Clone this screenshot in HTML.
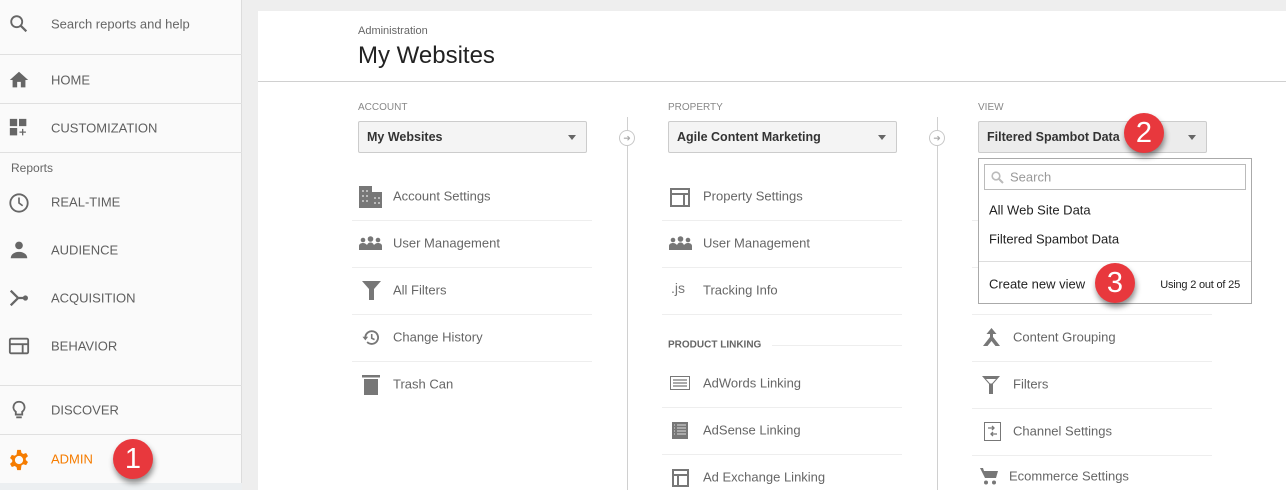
<!DOCTYPE html>
<html><head><meta charset="utf-8"><style>
*{margin:0;padding:0;box-sizing:border-box}
body{width:1286px;height:490px;overflow:hidden;background:#eeeeee;font-family:"Liberation Sans",Arial,sans-serif;position:relative}
.a{position:absolute}
#side{left:0;top:0;width:242px;height:490px;background:#fafafa;border-right:1px solid #dcdcdc}
.hr{position:absolute;height:1px;background:#e0e0e0}
.nav{position:absolute;left:51px;font-size:13px;color:#5f5f5f;transform:translateY(-50%)}
.ic{position:absolute;left:8px;transform:translateY(-50%)}
#card{left:258px;top:11px;width:1028px;height:479px;background:#fff}
.lbl{position:absolute;font-size:10px;color:#888}
.dd{position:absolute;height:32px;border:1px solid #ccc;border-radius:2px;background:#f4f4f4;font-size:12.5px;font-weight:bold;color:#333;padding:8px 0 0 8px}
.dd:after{content:"";position:absolute;right:10px;top:13px;border:4px solid transparent;border-top:5px solid #666}
.it{position:absolute;font-size:13px;color:#666;transform:translateY(-50%)}
.vl{position:absolute;width:1px;background:#d0d0d0;top:117px;height:373px}
.cir{position:absolute;width:16px;height:16px;border:1px solid #c8c8c8;border-radius:50%;background:#fff;color:#aaa;font-size:9px;text-align:center;line-height:14px}
.badge{position:absolute;width:40px;height:40px;border-radius:50%;background:#e8383d;color:#fff;font-size:29px;text-align:center;line-height:40px;box-shadow:1px 4px 6px rgba(0,0,0,.45)}
.g{fill:#777}
</style></head><body>
<div id="side" class="a">
 <svg class="ic" style="top:24px" width="22" height="22" viewBox="0 0 24 24"><circle cx="9.5" cy="9.5" r="6" fill="none" stroke="#666" stroke-width="2"/><path d="M14 14l6 6" stroke="#666" stroke-width="2.4"/></svg>
 <div class="nav" style="top:24px;text-transform:none;color:#666">Search reports and help</div>
 <div class="hr" style="top:54px;left:0;width:242px"></div>
 <svg class="ic" style="top:80px" width="22" height="22" viewBox="0 0 24 24"><path d="M10 20v-6h4v6h5v-8h3L12 3 2 12h3v8z" fill="#666"/></svg>
 <div class="nav" style="top:80px">HOME</div>
 <div class="hr" style="top:103px;left:0;width:242px"></div>
 <svg class="ic" style="top:128px" width="22" height="22" viewBox="0 0 24 24"><path d="M2 2h8v8H2zM12 2h8v8h-8zM2 12h8v8H2z" fill="#666"/><path d="M16 13v7M12.5 16.5h7" stroke="#666" stroke-width="1.4"/></svg>
 <div class="nav" style="top:128px">CUSTOMIZATION</div>
 <div class="hr" style="top:152px;left:0;width:242px"></div>
 <div class="a" style="left:11px;top:161px;font-size:12px;color:#666">Reports</div>
 <svg class="ic" style="top:203px" width="22" height="22" viewBox="0 0 24 24"><circle cx="12" cy="12" r="9.5" fill="none" stroke="#666" stroke-width="2"/><path d="M12 6v6l4 3" fill="none" stroke="#666" stroke-width="1.8"/></svg>
 <div class="nav" style="top:202px">REAL-TIME</div>
 <svg class="ic" style="top:250px" width="22" height="22" viewBox="0 0 24 24"><circle cx="12" cy="7" r="4.2" fill="#666"/><path d="M3 21c0-5 5-7 9-7s9 2 9 7z" fill="#666"/></svg>
 <div class="nav" style="top:250px">AUDIENCE</div>
 <svg class="ic" style="top:298px" width="22" height="22" viewBox="0 0 24 24"><path d="M3 4l8 8-8 8M11 12h7" fill="none" stroke="#666" stroke-width="2.5"/><circle cx="19" cy="12" r="2.8" fill="#666"/></svg>
 <div class="nav" style="top:298px">ACQUISITION</div>
 <svg class="ic" style="top:346px" width="22" height="22" viewBox="0 0 24 24"><rect x="2" y="4" width="20" height="16" rx="1.5" fill="none" stroke="#666" stroke-width="2"/><path d="M2 10h20M16 10v10" stroke="#666" stroke-width="2"/></svg>
 <div class="nav" style="top:346px">BEHAVIOR</div>
 <div class="hr" style="top:385px;left:0;width:242px"></div>
 <svg class="ic" style="top:410px" width="22" height="22" viewBox="0 0 24 24"><path d="M12 3a6 6 0 0 0-3.5 10.9V17h7v-3.1A6 6 0 0 0 12 3z" fill="none" stroke="#666" stroke-width="2"/><path d="M9 20h6" stroke="#666" stroke-width="2"/></svg>
 <div class="nav" style="top:410px">DISCOVER</div>
 <div class="hr" style="top:434px;left:0;width:242px"></div>
 <svg class="ic" style="top:460px" width="22" height="22" viewBox="0 0 24 24"><path d="M12 7.5a4.5 4.5 0 1 0 0 9 4.5 4.5 0 0 0 0-9zM10 1h4l.7 3.2 2 1.2 3.1-1 2 3.4-2.4 2.2v2l2.4 2.2-2 3.4-3.1-1-2 1.2L14 23h-4l-.7-3.2-2-1.2-3.1 1-2-3.4 2.4-2.2v-2L2.2 9.8l2-3.4 3.1 1 2-1.2z" fill="#f57c00" fill-rule="evenodd"/></svg>
 <div class="nav" style="top:459px;color:#f57c00">ADMIN</div>
 <div class="a" style="top:483px;left:0;width:242px;height:7px;background:#eceff1"></div>
</div>

<div id="card" class="a"></div>
<div class="a" style="left:358px;top:25px;font-size:11px;color:#666">Administration</div>
<div class="a" style="left:358px;top:42px;font-size:24px;color:#222">My Websites</div>
<div class="hr" style="top:81px;left:258px;width:1028px;background:#d0d0d0"></div>

<div class="lbl" style="left:358px;top:102px">ACCOUNT</div>
<div class="dd" style="left:358px;top:121px;width:229px">My Websites</div>
<svg class="a" style="left:359px;top:186px" width="23" height="22" viewBox="0 0 23 22"><path d="M0 0h13v6h10v16H0z" class="g"/><g fill="#bbb"><rect x="3" y="4" width="2" height="2"/><rect x="7" y="4" width="2" height="2"/><rect x="3" y="9" width="2" height="2"/><rect x="7" y="9" width="2" height="2"/><rect x="3" y="14" width="2" height="2"/><rect x="7" y="14" width="2" height="2"/><rect x="15" y="11" width="2" height="2"/><rect x="19" y="11" width="2" height="2"/><rect x="15" y="16" width="2" height="2"/><rect x="19" y="16" width="2" height="2"/></g></svg>
<div class="it" style="left:393px;top:196px">Account Settings</div>
<div class="hr" style="top:220px;left:352px;width:240px;background:#eee"></div>
<svg class="a" style="left:359px;top:236px" width="23" height="14" viewBox="0 0 23 14"><circle cx="4" cy="4" r="2.3" class="g"/><circle cx="11.5" cy="3" r="2.8" class="g"/><circle cx="19" cy="4" r="2.3" class="g"/><path d="M0 14v-4c0-2 2-3 4-3s3 1 4 2c1-2 2-2.5 3.5-2.5S14 7 15 9c1-1 2-2 4-2s4 1 4 3v4z" class="g"/></svg>
<div class="it" style="left:393px;top:243px">User Management</div>
<div class="hr" style="top:267px;left:352px;width:240px;background:#eee"></div>
<svg class="a" style="left:362px;top:281px" width="19" height="19" viewBox="0 0 19 19"><path d="M0 0h19l-7 8v11h-5V8z" class="g"/></svg>
<div class="it" style="left:393px;top:290px">All Filters</div>
<div class="hr" style="top:314px;left:352px;width:240px;background:#eee"></div>
<svg class="a" style="left:362px;top:329px" width="18" height="17" viewBox="0 0 24 24"><path d="M4 12a9 9 0 1 1 2.6 6.4" fill="none" stroke="#777" stroke-width="2.6"/><path d="M0 11h8l-4 5z" class="g"/><path d="M13 7v6l4 2" fill="none" stroke="#777" stroke-width="2.2"/></svg>
<div class="it" style="left:393px;top:337px">Change History</div>
<div class="hr" style="top:361px;left:352px;width:240px;background:#eee"></div>
<svg class="a" style="left:362px;top:375px" width="18" height="20" viewBox="0 0 18 20"><rect x="0" y="0" width="18" height="2.5" class="g"/><rect x="6" y="-1" width="6" height="2" class="g"/><rect x="2" y="4" width="14" height="16" class="g"/></svg>
<div class="it" style="left:393px;top:384px">Trash Can</div>

<div class="vl" style="left:627px"></div>
<div class="cir" style="left:619px;top:130px">➜</div>
<div class="vl" style="left:937px"></div>
<div class="cir" style="left:929px;top:130px">➜</div>

<div class="lbl" style="left:668px;top:102px">PROPERTY</div>
<div class="dd" style="left:668px;top:121px;width:229px">Agile Content Marketing</div>
<svg class="a" style="left:670px;top:188px" width="20" height="19" viewBox="0 0 20 19"><rect x="1" y="1" width="18" height="17" fill="none" stroke="#777" stroke-width="2"/><path d="M1 6h18M14 6v12" stroke="#777" stroke-width="2"/></svg>
<div class="it" style="left:703px;top:196px">Property Settings</div>
<div class="hr" style="top:220px;left:662px;width:240px;background:#eee"></div>
<svg class="a" style="left:669px;top:236px" width="23" height="14" viewBox="0 0 23 14"><circle cx="4" cy="4" r="2.3" class="g"/><circle cx="11.5" cy="3" r="2.8" class="g"/><circle cx="19" cy="4" r="2.3" class="g"/><path d="M0 14v-4c0-2 2-3 4-3s3 1 4 2c1-2 2-2.5 3.5-2.5S14 7 15 9c1-1 2-2 4-2s4 1 4 3v4z" class="g"/></svg>
<div class="it" style="left:703px;top:243px">User Management</div>
<div class="hr" style="top:267px;left:662px;width:240px;background:#eee"></div>
<div class="it" style="left:671px;top:288px;font-size:14px;color:#777">.js</div>
<div class="it" style="left:703px;top:290px">Tracking Info</div>
<div class="hr" style="top:314px;left:662px;width:240px;background:#eee"></div>
<div class="it" style="left:668px;top:345px;font-size:10px;font-weight:bold;color:#666">PRODUCT LINKING</div>
<div class="hr" style="top:345px;left:772px;width:130px;background:#eee"></div>
<svg class="a" style="left:670px;top:376px" width="20" height="14" viewBox="0 0 20 14"><rect x=".5" y=".5" width="19" height="13" fill="none" stroke="#777"/><path d="M3 4h14M3 7h14M3 10h14" stroke="#777" stroke-width="1.2"/></svg>
<div class="it" style="left:703px;top:383px">AdWords Linking</div>
<div class="hr" style="top:407px;left:662px;width:240px;background:#eee"></div>
<svg class="a" style="left:672px;top:422px" width="16" height="17" viewBox="0 0 16 17"><rect width="16" height="17" class="g"/><path d="M5 3h9M5 6h9M5 9h9M5 12h9M2 3h1M2 6h1M2 9h1M2 12h1" stroke="#ddd" stroke-width="1"/></svg>
<div class="it" style="left:703px;top:430px">AdSense Linking</div>
<div class="hr" style="top:454px;left:662px;width:240px;background:#eee"></div>
<svg class="a" style="left:672px;top:469px" width="17" height="18" viewBox="0 0 17 18"><rect x="1" y="1" width="15" height="16" fill="none" stroke="#777" stroke-width="2"/><path d="M1 6h15M6 6v11" stroke="#777" stroke-width="2"/></svg>
<div class="it" style="left:703px;top:477px">Ad Exchange Linking</div>

<div class="lbl" style="left:978px;top:102px">VIEW</div>
<div class="dd" style="left:978px;top:121px;width:229px;background:#ececec">Filtered Spambot Data</div>
<div class="hr" style="top:220px;left:972px;width:240px;background:#eee"></div>
<div class="hr" style="top:267px;left:972px;width:240px;background:#eee"></div>
<div class="hr" style="top:314px;left:972px;width:240px;background:#eee"></div>
<svg class="a" style="left:983px;top:328px" width="17" height="18" viewBox="0 0 17 18"><path d="M8.5 0l5 6h-3.5v3l7 9h-4.5l-4-5-4 5H0l7-9V6H3.5z" class="g"/></svg>
<div class="it" style="left:1013px;top:337px">Content Grouping</div>
<div class="hr" style="top:361px;left:972px;width:240px;background:#eee"></div>
<svg class="a" style="left:982px;top:376px" width="18" height="18" viewBox="0 0 18 18"><path d="M0 0h18l-7 8v10H7V8z" class="g"/><path d="M4 3h10l-4 4.5H8z" fill="#fff"/></svg>
<div class="it" style="left:1013px;top:384px">Filters</div>
<div class="hr" style="top:408px;left:972px;width:240px;background:#eee"></div>
<svg class="a" style="left:984px;top:422px" width="17" height="19" viewBox="0 0 17 19"><rect x=".5" y=".5" width="16" height="18" fill="none" stroke="#777"/><path d="M4 6h6M8 4l2 2-2 2M13 12H7M9 10l-2 2 2 2" fill="none" stroke="#777" stroke-width="1.3"/></svg>
<div class="it" style="left:1013px;top:431px">Channel Settings</div>
<div class="hr" style="top:455px;left:972px;width:240px;background:#eee"></div>
<svg class="a" style="left:980px;top:468px" width="18" height="17" viewBox="0 0 18 17"><path d="M0 0h3l1 3h14l-2 7H5z" class="g"/><circle cx="6" cy="14.5" r="2" class="g"/><circle cx="14" cy="14.5" r="2" class="g"/></svg>
<div class="it" style="left:1009px;top:476px">Ecommerce Settings</div>

<div class="a" style="left:978px;top:158px;width:274px;height:146px;background:#fff;border:1px solid #aaa"></div>
<div class="a" style="left:984px;top:164px;width:262px;height:26px;border:1px solid #bbb;background:#fff"></div>
<svg class="a" style="left:991px;top:171px" width="13" height="13" viewBox="0 0 13 13"><circle cx="5" cy="5" r="3.8" fill="none" stroke="#bbb" stroke-width="1.6"/><path d="M8 8l4 4" stroke="#bbb" stroke-width="2"/></svg>
<div class="it" style="left:1010px;top:177px;color:#999">Search</div>
<div class="it" style="left:989px;top:210px;color:#222">All Web Site Data</div>
<div class="it" style="left:989px;top:239px;color:#222">Filtered Spambot Data</div>
<div class="hr" style="top:261px;left:979px;width:272px;background:#ddd"></div>
<div class="it" style="left:989px;top:284px;color:#222">Create new view</div>
<div class="it" style="right:46px;top:285px;font-size:11px;color:#222;letter-spacing:-0.2px">Using 2 out of 25</div>

<div class="badge" style="left:113px;top:439px">1</div>
<div class="badge" style="left:1124px;top:113px">2</div>
<div class="badge" style="left:1095px;top:263px">3</div>
</body></html>
